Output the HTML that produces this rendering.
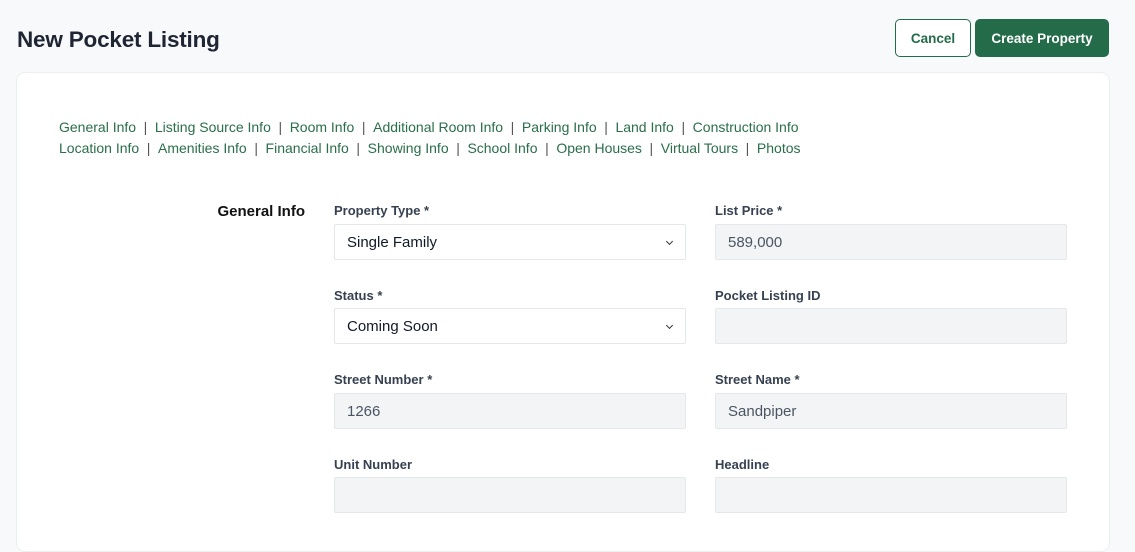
<!DOCTYPE html>
<html><head><meta charset="utf-8"><style>
*{box-sizing:border-box;margin:0;padding:0}
body{width:1135px;height:533px;overflow:hidden;background:#f8f9fb;font-family:"Liberation Sans",sans-serif;position:relative;color:#111827}
h1{position:absolute;left:17px;top:27px;font-size:22.5px;font-weight:700;color:#1f2533;letter-spacing:-0.2px}
.btn{position:absolute;top:19px;height:38px;border-radius:5px;font-size:13.5px;font-weight:700;display:flex;align-items:center;justify-content:center}
.cancel{left:895px;width:76px;border:1px solid #246b4a;background:#fff;color:#246b4a}
.create{left:975px;width:134px;background:#246b4a;color:#fff}
.card{position:absolute;left:16px;top:72px;width:1094px;height:480px;background:#fff;border:1px solid #eceef1;border-radius:9px}
.links{position:absolute;left:59px;font-size:14px;color:#2a6e4c;white-space:nowrap}
.links span{color:#555;margin:0 7.6px}
.sec{position:absolute;left:170px;width:135px;text-align:right;top:203px;font-size:15px;font-weight:600;color:#111}
.lbl{position:absolute;font-size:13px;font-weight:600;color:#374151}
.inp{position:absolute;width:352px;height:36px;border:1px solid #e5e7eb;border-radius:2px;background:#f3f4f6;font-size:15px;color:#4b5563;padding-left:12px;line-height:36px}
.sel{background:#fff;color:#111827}
.sel:after{content:"";position:absolute;right:13px;top:14px;width:4px;height:4px;border-right:1.2px solid #333;border-bottom:1.2px solid #333;transform:rotate(45deg)}
</style></head><body>
<h1>New Pocket Listing</h1>
<div class="btn cancel">Cancel</div>
<div class="btn create">Create Property</div>
<div class="card"></div>
<div class="links" style="top:119px">General Info<span>|</span>Listing Source Info<span>|</span>Room Info<span>|</span>Additional Room Info<span>|</span>Parking Info<span>|</span>Land Info<span>|</span>Construction Info</div>
<div class="links" style="top:140px">Location Info<span>|</span>Amenities Info<span>|</span>Financial Info<span>|</span>Showing Info<span>|</span>School Info<span>|</span>Open Houses<span>|</span>Virtual Tours<span>|</span>Photos</div>
<div class="sec">General Info</div>

<div class="lbl" style="left:334px;top:203px">Property Type *</div>
<div class="inp sel" style="left:334px;top:224px">Single Family</div>
<div class="lbl" style="left:715px;top:203px">List Price *</div>
<div class="inp" style="left:715px;top:224px">589,000</div>

<div class="lbl" style="left:334px;top:288px">Status *</div>
<div class="inp sel" style="left:334px;top:308px">Coming Soon</div>
<div class="lbl" style="left:715px;top:288px">Pocket Listing ID</div>
<div class="inp" style="left:715px;top:308px"></div>

<div class="lbl" style="left:334px;top:372px">Street Number *</div>
<div class="inp" style="left:334px;top:393px">1266</div>
<div class="lbl" style="left:715px;top:372px">Street Name *</div>
<div class="inp" style="left:715px;top:393px">Sandpiper</div>

<div class="lbl" style="left:334px;top:457px">Unit Number</div>
<div class="inp" style="left:334px;top:477px"></div>
<div class="lbl" style="left:715px;top:457px">Headline</div>
<div class="inp" style="left:715px;top:477px"></div>
</body></html>
